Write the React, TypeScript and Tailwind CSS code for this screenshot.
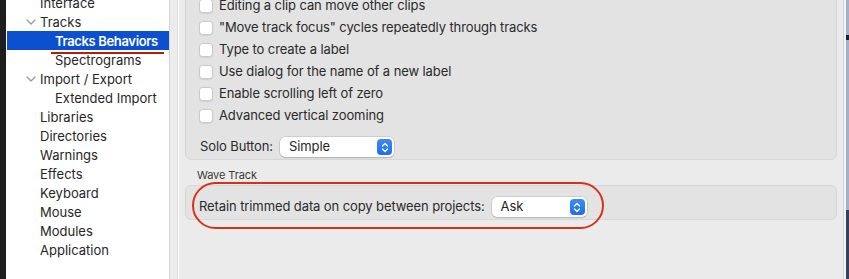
import { FC } from "react";

const font = { fontFamily: "Inter, 'Liberation Sans', sans-serif" };

const navItems = [
  { label: "Interface", level: 0 },
  { label: "Tracks", level: 0, open: true },
  { label: "Tracks Behaviors", level: 1, selected: true },
  { label: "Spectrograms", level: 1 },
  { label: "Import / Export", level: 0, open: true },
  { label: "Extended Import", level: 1 },
  { label: "Libraries", level: 0 },
  { label: "Directories", level: 0 },
  { label: "Warnings", level: 0 },
  { label: "Effects", level: 0 },
  { label: "Keyboard", level: 0 },
  { label: "Mouse", level: 0 },
  { label: "Modules", level: 0 },
  { label: "Application", level: 0 },
];

const options = [
  "Editing a clip can move other clips",
  "\"Move track focus\" cycles repeatedly through tracks",
  "Type to create a label",
  "Use dialog for the name of a new label",
  "Enable scrolling left of zero",
  "Advanced vertical zooming",
];

const Chevron: FC = () => (
  <svg width="10" height="6" viewBox="0 0 10 6" className="absolute left-[19px] top-[7px]">
    <path d="M1 1l4 4 4-4" fill="none" stroke="#9a9a9a" strokeWidth="1.3" strokeLinecap="round" strokeLinejoin="round" />
  </svg>
);

const PopUp: FC<{ value: string; width: string }> = ({ value, width }) => (
  <div className={`relative h-[20px] ${width} bg-white rounded-[5px] shadow-[0_0_0_0.5px_rgba(0,0,0,0.18),0_1px_1.5px_rgba(0,0,0,0.12)] flex items-center pl-[9px] text-[13px] text-[#262626]`}>
    {value}
    <div className="absolute right-[2px] top-[2px] w-[15px] h-[16px] rounded-[4px] bg-gradient-to-b from-[#3d8af7] to-[#1a6ef0] flex items-center justify-center">
      <svg width="8" height="11" viewBox="0 0 8 11">
        <path d="M1.5 4l2.5-2.5L6.5 4M1.5 7l2.5 2.5L6.5 7" fill="none" stroke="white" strokeWidth="1.4" strokeLinecap="round" strokeLinejoin="round" />
      </svg>
    </div>
  </div>
);

const Checkbox: FC = () => (
  <div className="w-[14px] h-[14px] rounded-[3.5px] bg-white border border-[#c9c9c9] shadow-[0_0.5px_1px_rgba(0,0,0,0.08)] flex-shrink-0" />
);

export default function App() {
  return (
    <div className="w-[849px] h-[279px] flex overflow-hidden bg-[#ebebeb]" style={font}>
      <div className="w-[6px] bg-[#1e1e1e] flex-shrink-0" />

      {/* sidebar tree */}
      <div className="w-[164px] bg-white flex-shrink-0 border-r border-[#d4d4d4]">
        <ul className="-mt-[7px] pl-[1px]">
          {navItems.map((item) => (
            <li
              key={item.label}
              className={`relative h-[19px] flex items-center pt-[2px] text-[13px] ${item.selected ? "bg-[#0c50cf] text-white font-semibold tracking-[-0.35px]" : "text-[#262626]"}`}
            >
              {item.open && <Chevron />}
              <span className={item.level === 1 ? "pl-[48px]" : "pl-[33px]"}>{item.label}</span>
              {item.selected && (
                <div className="absolute left-[44px] top-[21px] w-[113px] h-[2px] bg-[#b0200f]" />
              )}
            </li>
          ))}
        </ul>
      </div>
      <div className="w-[8px] bg-[#ececec] border-r border-[#dcdcdc] flex-shrink-0" />
      <div className="w-[1px] bg-white flex-shrink-0" />

      {/* settings pane */}
      <div className="flex-1 px-[6px] text-[13px] text-[#2a2a2a] tracking-[-0.1px]">
        <div className="-mt-[14px] bg-[#e3e3e3] border border-[#d7d7d7] rounded-[6px] pt-[8px] pb-[2px]">
          {options.map((opt) => (
            <div key={opt} className="h-[22px] flex items-center gap-[6px] pl-[13px]">
              <Checkbox />
              <span>{opt}</span>
            </div>
          ))}
          <div className="mt-[10px] flex items-center gap-[7px] pl-[14px]">
            <span>Solo Button:</span>
            <PopUp value="Simple" width="w-[114px]" />
          </div>
        </div>

        <div className="mt-[8px] mb-[3px] h-[14px] flex items-center pl-[12px] text-[11px] text-[#3a3a3a]">
          Wave Track
        </div>

        <div className="relative bg-[#e3e3e3] border border-[#d7d7d7] rounded-[6px] pt-[11px] pb-[2px]">
          <div className="flex items-center gap-[7px] pl-[13px]">
            <span>Retain trimmed data on copy between projects:</span>
            <PopUp value="Ask" width="w-[95px]" />
          </div>
          <div className="absolute left-[6px] -top-[4px] w-[412px] h-[47px] rounded-[24px] border-2 border-[#d8311a] pointer-events-none" />
        </div>
      </div>

      <div className="w-[1px] bg-[#d2d2d2] flex-shrink-0" />
      <div className="w-[2px] bg-[#f4f4f4] flex-shrink-0" />
      <div className="w-[3px] flex-shrink-0 flex flex-col">
        <div className="h-[35px] bg-[#a7b0cb]" />
        <div className="h-[5px] bg-[#1e1e24]" />
        <div className="h-[170px] bg-[#a7b0cb]" />
        <div className="flex-1 bg-[#3b3e58]" />
      </div>
    </div>
  );
}
